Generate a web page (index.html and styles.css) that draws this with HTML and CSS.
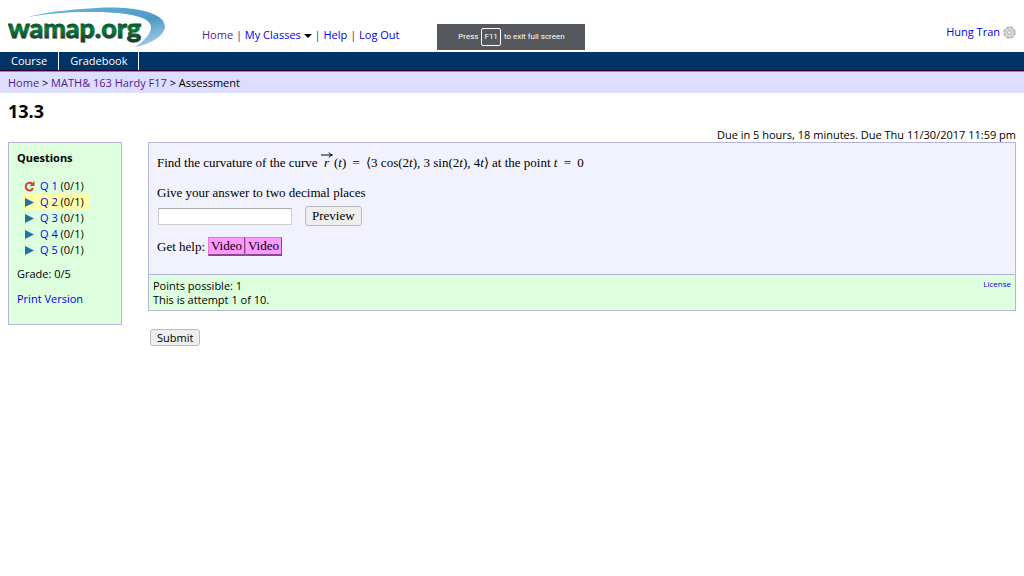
FILE: index.html
```html
<!DOCTYPE html>
<html lang="en">
<head>
  <meta charset="UTF-8">
  <meta name="viewport" content="width=device-width, initial-scale=1.0">
  <title>13.3 - Assessment</title>
  <link rel="stylesheet" href="styles.css">
</head>
<body>
  <header class="header">
    <a class="logo" href="#" aria-label="wamap.org">
      <svg width="160" height="44" viewBox="0 0 160 44">
        <defs>
          <linearGradient id="swoosh" x1="0" y1="0" x2="1" y2="1">
            <stop offset="0" stop-color="#69b8e0"/>
            <stop offset="0.6" stop-color="#4f99c8"/>
            <stop offset="1" stop-color="#b9d5ec"/>
          </linearGradient>
          <linearGradient id="green" x1="0" y1="0" x2="0" y2="1">
            <stop offset="0.3" stop-color="#0b3a20"/>
            <stop offset="0.55" stop-color="#0d7a3c"/>
            <stop offset="0.85" stop-color="#17402a"/>
          </linearGradient>
        </defs>
        <path fill="url(#swoosh)" d="M19 10C43 4 69 2 89 1C116-1 157 3 157 20C156 29 143 37 127 40C137 33 143 27 143 20C143 8 112 5 82 5C56 5 38 7 19 10Z"/>
        <text class="logo-shadow" x="1" y="32">wamap.org</text>
        <text class="logo-text" x="0" y="31">wamap.org</text>
      </svg>
    </a>
    <nav class="top-links">
      <a class="visited" href="#">Home</a>
      <i>|</i>
      <a href="#">My Classes <svg width="8" height="4" viewBox="0 0 8 4"><path d="M0 0h8L4 4z"/></svg></a>
      <i>|</i>
      <a href="#">Help</a>
      <i>|</i>
      <a href="#">Log Out</a>
    </nav>
    <div class="fullscreen-note">Press <kbd>F11</kbd> to exit full screen</div>
    <div class="user">
      <a href="#">Hung Tran</a>
      <svg width="13" height="13" viewBox="0 0 13 13">
        <circle cx="6.5" cy="6.5" r="5.3" fill="#ddd" stroke="#b4b4b4" stroke-width="1.8" stroke-dasharray="3.2 0.96"/>
        <circle cx="6.5" cy="6.5" r="4.3" fill="#ddd" stroke="#ccc"/>
        <circle cx="6.5" cy="6.5" r="2" fill="#eee" stroke="#aaa"/>
      </svg>
    </div>
  </header>

  <nav class="navbar">
    <a href="#">Course</a>
    <a href="#">Gradebook</a>
  </nav>
  <div class="breadcrumb">
    <a href="#">Home</a> &gt; <a href="#">MATH&amp; 163 Hardy F17</a> &gt; Assessment
  </div>

  <main>
    <h1>13.3</h1>
    <p class="due">Due in 5 hours, 18 minutes. Due Thu 11/30/2017 11:59 pm</p>

    <div class="columns">
      <aside class="sidebar">
        <h2>Questions</h2>
        <ul>
          <li><svg width="11" height="11" viewBox="0 0 11 11"><path d="M8.3 3A3.8 3.8 0 1 0 9 7.2" fill="none" stroke="#d9402f" stroke-width="2"/><path d="M10.5 0v5H5.5z" fill="#d9402f"/></svg><a href="#">Q 1</a> (0/1)</li>
          <li class="current"><svg width="11" height="11" viewBox="0 0 11 11"><path d="M1 1L10 5.5L1 10z"/></svg><a href="#">Q 2</a> (0/1)</li>
          <li><svg width="11" height="11" viewBox="0 0 11 11"><path d="M1 1L10 5.5L1 10z"/></svg><a href="#">Q 3</a> (0/1)</li>
          <li><svg width="11" height="11" viewBox="0 0 11 11"><path d="M1 1L10 5.5L1 10z"/></svg><a href="#">Q 4</a> (0/1)</li>
          <li><svg width="11" height="11" viewBox="0 0 11 11"><path d="M1 1L10 5.5L1 10z"/></svg><a href="#">Q 5</a> (0/1)</li>
        </ul>
        <p>Grade: 0/5</p>
        <p><a href="#">Print Version</a></p>
      </aside>

      <form class="content" onsubmit="return false">
        <div class="question">
          <p>Find the curvature of the curve
            <span class="math"><span class="vector"><svg width="12" height="6" viewBox="0 0 12 6"><path d="M0 3h11M8 .5Q9 2.6 11.5 3Q9 3.4 8 5.5" fill="none" stroke="#000"/></svg><var>r</var></span>(<var>t</var>) <b>=</b> ⟨3 cos(2<var>t</var>), 3 sin(2<var>t</var>), 4<var>t</var>⟩</span>
            at the point <span class="math"><var>t</var> <b>=</b> 0</span></p>
          <p><label for="answer">Give your answer to two decimal places</label></p>
          <div class="answer-row">
            <input type="text" id="answer">
            <button type="button">Preview</button>
          </div>
          <div class="help-row">Get help: <button type="button">Video</button><button type="button">Video</button></div>
        </div>
        <div class="review">
          <div>Points possible: 1<br>This is attempt 1 of 10.</div>
          <a href="#">License</a>
        </div>
        <button class="submit" type="submit">Submit</button>
      </form>
    </div>
  </main>
</body>
</html>
```
FILE: styles.css
```css
* {
  box-sizing: border-box;
}
body {
  margin: 0;
  background-color: #fff;
  color: #000;
  font-family: "Trebuchet MS", "Open Sans", sans-serif;
  font-size: 11px;
  line-height: 16px;
}
a {
  color: #0000ee;
  text-decoration: none;
}
.header {
  display: flex;
  height: 52px;
  padding: 0 8px;
}
.logo {
  padding-top: 7px;
  margin-right: 34px;
}
.logo svg {
  display: block;
}
.logo-text,
.logo-shadow {
  font-family: Lato, sans-serif;
  font-size: 27px;
  font-weight: bold;
}
.logo-text {
  fill: url(#green);
  stroke: url(#green);
}
.logo-shadow {
  fill: #c8c8c8;
}
.top-links {
  padding-top: 27px;
  white-space: nowrap;
}
.top-links i {
  color: #224466;
  font-style: normal;
}
.top-links svg {
  vertical-align: 1px;
}
.visited,
.breadcrumb a {
  color: #551a8b;
}
.fullscreen-note {
  display: flex;
  align-items: center;
  justify-content: center;
  gap: 3px;
  width: 148px;
  height: 26px;
  margin: 24px 0 0 38px;
  background-color: #55585c;
  color: #fff;
  font-family: Roboto, sans-serif;
  font-size: 8px;
  white-space: nowrap;
}
.fullscreen-note kbd {
  padding: 0 2px;
  border: 1px solid #fff;
  border-radius: 2px;
  font-family: inherit;
  font-size: 8px;
}
.user {
  display: flex;
  align-items: center;
  gap: 3px;
  height: 16px;
  margin: 24px 0 0 auto;
}
.navbar {
  display: flex;
  height: 19px;
  background-color: #003366;
  border-bottom: 1px solid #330033;
}
.navbar a {
  padding: 1px 11px;
  border-right: 1px solid #fff;
  color: #fff;
}
.breadcrumb {
  padding: 3px 8px 2px;
  background-color: #ddddff;
  border-top: 1px solid #a678b4;
}
main {
  padding: 0 8px;
}
h1 {
  margin: 8px 0 0;
  font-size: 18px;
  line-height: 20px;
}
.due {
  margin: 6px 0 0;
  text-align: right;
}
.columns {
  display: flex;
  align-items: flex-start;
  gap: 26px;
  margin-top: -1px;
}
.sidebar {
  flex: 0 0 114px;
  padding: 7px 8px 8px;
  background-color: #ddffdd;
  border: 1px solid #b4b4dc;
}
.sidebar h2 {
  margin: 0;
  font-size: 11px;
}
.sidebar ul {
  margin: 12px 24px 8px 7px;
  padding: 0;
  list-style: none;
}
.sidebar li {
  display: flex;
  align-items: center;
  white-space: pre;
}
.sidebar li svg {
  margin-right: 5px;
  fill: #1c74a6;
}
.sidebar .current {
  background-color: #ffffaa;
}
.sidebar p {
  margin: 0 0 9px;
}
.content {
  flex: 1;
}
.question {
  padding: 12px 8px 18px;
  background-color: #f2f2ff;
  border: 1px solid #b4b4dc;
  font-family: "Times New Roman", "Liberation Serif", serif;
  font-size: 13px;
}
.question p {
  margin: 0 0 14px;
}
.math b {
  margin: 0 3px;
  font-weight: normal;
}
.vector {
  position: relative;
  padding: 0 5px 0 3px;
}
.vector svg {
  position: absolute;
  top: -3px;
  left: 0;
}
.answer-row {
  display: flex;
  gap: 13px;
  margin-top: -9px;
}
.answer-row input {
  width: 134px;
  height: 17px;
  margin: 2px 0 0 1px;
  border: 1px solid #ccc;
  border-top-color: #aaa;
}
.answer-row button,
.submit {
  padding: 0 6px;
  background-color: #eee;
  border: 1px solid #bbb;
  border-radius: 3px;
  color: #000;
}
.answer-row button {
  height: 20px;
  font: inherit;
}
.help-row {
  display: flex;
  align-items: center;
  margin: 11px 0 0;
}
.help-row button {
  height: 19px;
  padding: 0 2px;
  background-color: #ff99ff;
  border: 1px outset #dd77dd;
  border-width: 1px 1px 2px;
  color: #000;
  font: inherit;
}
.help-row button:first-of-type {
  margin-left: 3px;
}
.review {
  display: flex;
  justify-content: space-between;
  padding: 4px 4px 3px;
  background-color: #ddffdd;
  border: 1px solid #b4b4dc;
  border-top: none;
  line-height: 14px;
}
.review a {
  font-size: 8px;
  line-height: 10px;
}
.submit {
  height: 17px;
  margin: 18px 0 0 2px;
  font: inherit;
  line-height: 14px;
}
```
